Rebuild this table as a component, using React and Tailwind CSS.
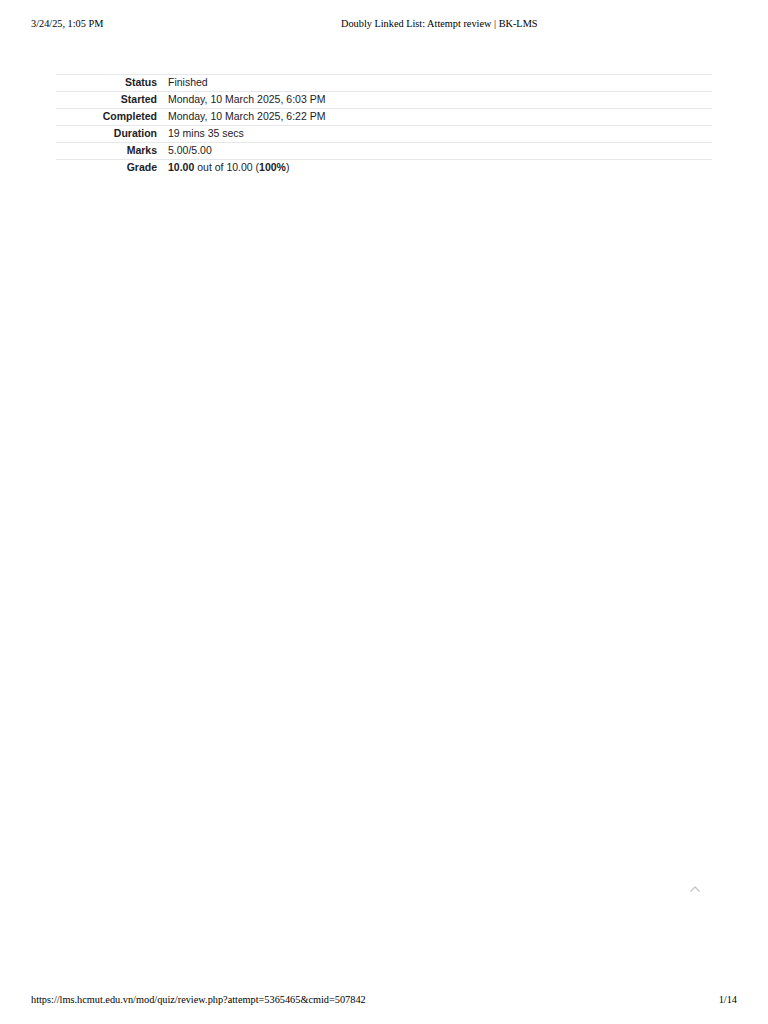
import React from 'react';

const ROWS = [
  { label: 'Status', value: 'Finished' },
  { label: 'Started', value: 'Monday, 10 March 2025, 6:03 PM' },
  { label: 'Completed', value: 'Monday, 10 March 2025, 6:22 PM' },
  { label: 'Duration', value: '19 mins 35 secs' },
  { label: 'Marks', value: '5.00/5.00' },
  {
    label: 'Grade',
    value: (
      <>
        <b>10.00</b> out of 10.00 (<b>100%</b>)
      </>
    ),
  },
];

export default function App() {
  return (
    <div className="relative h-[1024px] w-full bg-white flex flex-col text-black">
      {/* print header */}
      <div className="flex px-[31px] pt-[18px] text-[10.3px] leading-[12px] font-['Liberation_Serif',serif]">
        <span className="w-[310px]">3/24/25, 1:05 PM</span>
        <span>Doubly Linked List: Attempt review | BK-LMS</span>
      </div>

      {/* summary table */}
      <div className="mx-[56px] mt-[44px] font-['Liberation_Sans',Arial,sans-serif] text-[10.5px] leading-[14px] text-[#1d2125]">
        {ROWS.map((row) => (
          <div key={row.label} className="flex h-[17px] items-center pb-[2px] border-t border-[#e5e7ea]">
            <div className="w-[105px] pr-[4px] text-right font-bold">{row.label}</div>
            <div className="pl-[7px]">{row.value}</div>
          </div>
        ))}
      </div>

      <div className="flex-1" />

      {/* back to top chevron */}
      <div className="absolute left-[689px] top-[885px] text-[#c4c4c4]">
        <svg width="12" height="8" viewBox="0 0 12 8" fill="none" stroke="currentColor" strokeWidth="1.3">
          <path d="M1.5 6.5 L6 2 L10.5 6.5" />
        </svg>
      </div>

      {/* print footer */}
      <div className="flex justify-between px-[31px] pb-[18px] text-[10.3px] leading-[12px] font-['Liberation_Serif',serif]">
        <span>https://lms.hcmut.edu.vn/mod/quiz/review.php?attempt=5365465&amp;cmid=507842</span>
        <span>1/14</span>
      </div>
    </div>
  );
}
